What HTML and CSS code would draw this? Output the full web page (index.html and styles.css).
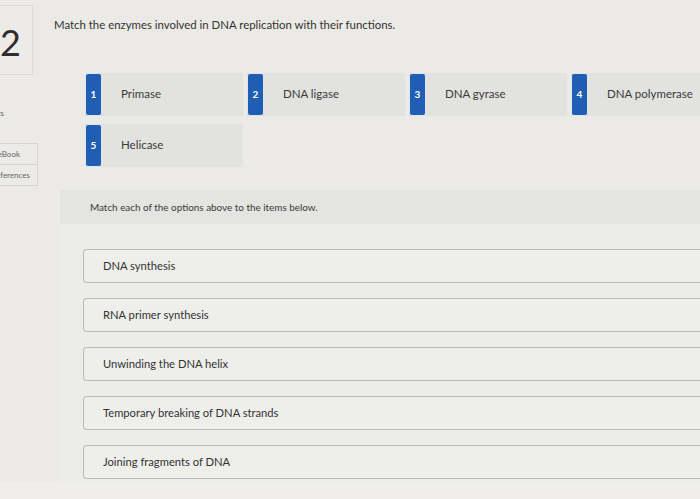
FILE: index.html
```html
<!DOCTYPE html>
<html>
<head>
<meta charset="utf-8">
<link rel="stylesheet" href="styles.css">
</head>
<body>
<div class="page">
  <aside class="sidebar">
    <div class="qnum">2</div>
    <div class="clip points"><span>Points</span></div>
    <div class="side-links">
      <div class="side-link clip"><span>eBook</span></div>
      <div class="side-link clip"><span>References</span></div>
    </div>
  </aside>
  <main class="main">
    <p class="question">Match the enzymes involved in DNA replication with their functions.</p>
    <div class="options">
      <div class="card"><span class="badge">1</span><span class="label">Primase</span></div>
      <div class="card"><span class="badge">2</span><span class="label">DNA ligase</span></div>
      <div class="card"><span class="badge">3</span><span class="label">DNA gyrase</span></div>
      <div class="card"><span class="badge">4</span><span class="label">DNA polymerase</span></div>
      <div class="card"><span class="badge">5</span><span class="label">Helicase</span></div>
    </div>
    <section class="panel">
      <div class="panel-head">Match each of the options above to the items below.</div>
      <div class="panel-body">
        <div class="drop">DNA synthesis</div>
        <div class="drop">RNA primer synthesis</div>
        <div class="drop">Unwinding the DNA helix</div>
        <div class="drop">Temporary breaking of DNA strands</div>
        <div class="drop">Joining fragments of DNA</div>
      </div>
    </section>
  </main>
</div>
</body>
</html>
```

FILE: styles.css
```css
html, body {
  margin: 0;
  padding: 0;
  overflow: hidden;
}
body {
  width: 700px;
  height: 499px;
  background: #efeeeb;
  font-family: "Lato", "Open Sans", sans-serif;
  color: #3a3a3a;
}
.page {
  display: flex;
  height: 481px;
  background: #ebeae6;
}
.sidebar {
  width: 54px;
  flex: none;
  display: flex;
  flex-direction: column;
}
.qnum {
  margin-top: 5px;
  width: 33px;
  height: 70px;
  box-sizing: border-box;
  border: 1px solid #dcdbd7;
  border-left: none;
  background: #ecebe8;
  font-size: 36px;
  font-weight: 400;
  line-height: 72px;
  color: #2d2d2d;
}
.clip {
  display: flex;
  justify-content: flex-end;
  overflow: hidden;
  white-space: nowrap;
}
.points {
  width: 4px;
  margin-top: 33px;
  font-size: 8px;
  color: #666;
  line-height: 10px;
}
.side-links {
  margin-top: 25px;
  width: 38px;
}
.side-link {
  height: 22px;
  box-sizing: border-box;
  border: 1px solid #d6d5d1;
  border-left: none;
  background: #ecebe8;
  font-size: 8px;
  color: #666;
  align-items: center;
  padding-right: 7px;
}
.side-link + .side-link {
  border-top: none;
  height: 21px;
}
.side-link:first-child {
  padding-right: 17px;
}
.main {
  flex: 1;
  min-width: 0;
}
.question {
  margin: 18px 0 0;
  font-size: 11.4px;
  line-height: 13px;
  color: #333;
}
.options {
  margin: 42px 0 0 31px;
  display: grid;
  grid-template-columns: repeat(4, 158px);
  column-gap: 4px;
  row-gap: 8px;
}
.card {
  display: flex;
  align-items: center;
  height: 43px;
  background: #e2e2df;
}
.badge {
  width: 17px;
  height: 43px;
  box-sizing: border-box;
  flex: none;
  background: #1f5eb3;
  border: 1px solid #dfe6ef;
  border-radius: 3px;
  color: #fff;
  font-size: 10px;
  font-weight: 700;
  display: flex;
  align-items: center;
  justify-content: center;
  padding-bottom: 2px;
}
.label {
  margin-left: 19px;
  margin-bottom: 2px;
  font-size: 11.5px;
  color: #3b3b3b;
  white-space: nowrap;
}
.panel {
  margin: 23px 0 0 6px;
  background: #ecece8;
}
.panel-head {
  height: 34px;
  background: #e4e4e0;
  padding-left: 30px;
  font-size: 9.9px;
  line-height: 34px;
  color: #3a3a3a;
}
.panel-body {
  padding: 25px 0 3px 23px;
  display: flex;
  flex-direction: column;
  gap: 15px;
}
.drop {
  height: 34px;
  box-sizing: border-box;
  border: 1px solid #b8babd;
  border-right: none;
  border-radius: 4px 0 0 4px;
  background: #eeeeeb;
  padding-left: 19px;
  font-size: 11.2px;
  line-height: 32px;
  color: #333;
}
```
